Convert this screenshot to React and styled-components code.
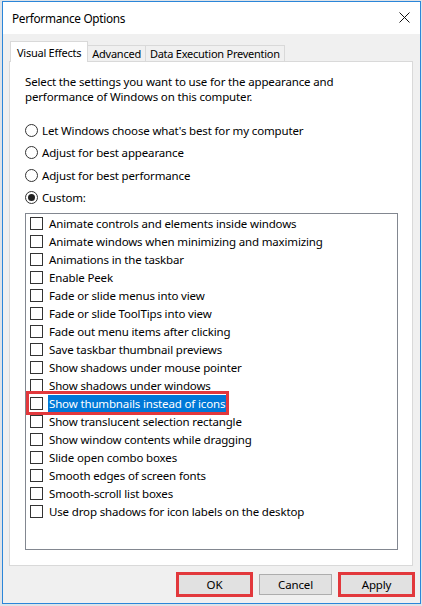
import React from "react";
import styled, { createGlobalStyle } from "styled-components";

const options = [
  "Animate controls and elements inside windows",
  "Animate windows when minimizing and maximizing",
  "Animations in the taskbar",
  "Enable Peek",
  "Fade or slide menus into view",
  "Fade or slide ToolTips into view",
  "Fade out menu items after clicking",
  "Save taskbar thumbnail previews",
  "Show shadows under mouse pointer",
  "Show shadows under windows",
  "Show thumbnails instead of icons",
  "Show translucent selection rectangle",
  "Show window contents while dragging",
  "Slide open combo boxes",
  "Smooth edges of screen fonts",
  "Smooth-scroll list boxes",
  "Use drop shadows for icon labels on the desktop",
];

const radios = [
  { label: "Let Windows choose what's best for my computer" },
  { label: "Adjust for best appearance" },
  { label: "Adjust for best performance" },
  { label: "Custom:", checked: true },
];

const App = () => {
  return (
    <>
      <GlobalStyle />
      <Window>
        <TitleBar>
          <Title>Performance Options</Title>
          <CloseButton>
            <svg width="11" height="11" viewBox="0 0 11 11">
              <path d="M0.5 0.5 L10.5 10.5 M10.5 0.5 L0.5 10.5" stroke="#111" strokeWidth="1" />
            </svg>
          </CloseButton>
        </TitleBar>
        <Body>
          <Tabs>
            <Tab active>Visual Effects</Tab>
            <Tab>Advanced</Tab>
            <Tab>Data Execution Prevention</Tab>
          </Tabs>
          <Panel>
            <Description>
              Select the settings you want to use for the appearance and
              <br />
              performance of Windows on this computer.
            </Description>
            <RadioGroup>
              {radios.map((r) => (
                <RadioRow key={r.label}>
                  <Radio checked={r.checked} />
                  <span>{r.label}</span>
                </RadioRow>
              ))}
            </RadioGroup>
            <ListBox>
              {options.map((item) => {
                const selected = item === "Show thumbnails instead of icons";
                return (
                  <Row key={item}>
                    <Item marked={selected}>
                      <Checkbox />
                      <Label selected={selected}>{item}</Label>
                    </Item>
                  </Row>
                );
              })}
            </ListBox>
          </Panel>
          <Footer>
            <Button isDefault marked>
              OK
            </Button>
            <Button>Cancel</Button>
            <Button marked>Apply</Button>
          </Footer>
        </Body>
      </Window>
    </>
  );
};

export default App;

const GlobalStyle = createGlobalStyle`
  body {
    margin: 0;
    background: #dfe3e8;
    font-family: "Noto Sans", "Liberation Sans", sans-serif;
    font-size: 11.5px;
    letter-spacing: -0.15px;
    color: #000;
  }
`;

const Window = styled.div`
  box-sizing: border-box;
  width: 419px;
  height: 603px;
  margin: 1px 0 0 2px;
  border: 1px solid #2b86d9;
  background: #f0f0f0;
  display: flex;
  flex-direction: column;
`;

const TitleBar = styled.div`
  height: 31px;
  background: #fff;
  display: flex;
  align-items: center;
  justify-content: space-between;
  padding: 0 9px 1px 9px;
`;

const Title = styled.span`
  font-size: 11.8px;
  letter-spacing: -0.3px;
`;

const CloseButton = styled.div`
  display: flex;
  align-items: center;
  padding-right: 1px;
`;

const Body = styled.div`
  flex: 1;
  display: flex;
  flex-direction: column;
  padding: 7px 7px 0 6px;
`;

const Tabs = styled.div`
  display: flex;
  align-items: flex-end;
  height: 21px;
  padding-left: 1px;
  position: relative;
  z-index: 1;
  margin-bottom: -1px;
`;

const Tab = styled.div`
  box-sizing: border-box;
  height: ${(p) => (p.active ? "21px" : "17px")};
  padding: ${(p) => (p.active ? "1px 6px 0 6px" : "0 4px")};
  margin-left: ${(p) => (p.active ? "0" : "-1px")};
  background: ${(p) => (p.active ? "#fff" : "#f0f0f0")};
  border: 1px solid #d9d9d9;
  border-bottom: ${(p) => (p.active ? "none" : "1px solid #d9d9d9")};
  display: flex;
  align-items: center;
  white-space: nowrap;
  font-size: 11px;
  letter-spacing: -0.25px;
`;

const Panel = styled.div`
  box-sizing: border-box;
  height: 505px;
  background: #fff;
  border: 1px solid #d9d9d9;
  padding: 12px 14px 0 15px;
`;

const Description = styled.div`
  line-height: 15px;
`;

const RadioGroup = styled.div`
  margin-top: 15px;
  display: flex;
  flex-direction: column;
`;

const RadioRow = styled.div`
  height: 22.5px;
  display: flex;
  align-items: center;
  gap: 4px;
`;

const Radio = styled.span`
  box-sizing: border-box;
  width: 13px;
  height: 13px;
  border-radius: 50%;
  border: 1px solid #333;
  display: flex;
  align-items: center;
  justify-content: center;

  &::after {
    content: "";
    display: ${(p) => (p.checked ? "block" : "none")};
    width: 7px;
    height: 7px;
    border-radius: 50%;
    background: #222;
  }
`;

const ListBox = styled.div`
  box-sizing: border-box;
  margin-top: 4px;
  width: 373px;
  height: 337px;
  border: 1px solid #828790;
`;

const Row = styled.div`
  height: 18px;
  display: flex;
  align-items: center;
  padding-left: 3px;
`;

const Item = styled.div`
  height: 18px;
  display: flex;
  align-items: center;
  padding-left: 1px;
  outline: ${(p) => (p.marked ? "3px solid #e2383c" : "none")};
`;

const Checkbox = styled.span`
  box-sizing: border-box;
  width: 13px;
  height: 13px;
  border: 1px solid #333;
  background: #fff;
  margin-right: 5px;
`;

const Label = styled.span`
  line-height: 17px;
  padding: 0 1px;
  white-space: nowrap;
  background: ${(p) => (p.selected ? "#0078d7" : "transparent")};
  color: ${(p) => (p.selected ? "#fff" : "#000")};
`;

const Footer = styled.div`
  display: flex;
  justify-content: flex-end;
  gap: 8px;
  padding-top: 8px;
`;

const Button = styled.div`
  box-sizing: border-box;
  width: 73px;
  height: 21px;
  background: #e1e1e1;
  border: 1px solid ${(p) => (p.isDefault ? "#0078d7" : "#adadad")};
  display: flex;
  align-items: center;
  justify-content: center;
  outline: ${(p) => (p.marked ? "3px solid #e2383c" : "none")};
  outline-offset: -1px;
`;
